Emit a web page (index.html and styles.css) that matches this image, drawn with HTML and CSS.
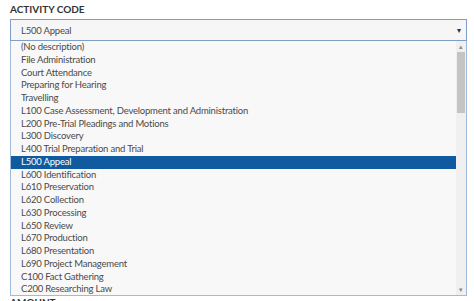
FILE: index.html
```html
<!DOCTYPE html>
<html lang="en">

<head>
    <meta charset="UTF-8">
    <title>Activity Code</title>
    <link rel="stylesheet" href="styles.css">
</head>

<body>

    <div class="field">
        <div class="field-label">ACTIVITY CODE</div>
        <div class="select">
            <span class="select-value">L500 Appeal</span>
            <span class="select-arrow">&#9662;</span>
        </div>
        <div class="dropdown">
            <ul class="options">
                <li>(No description)</li>
                <li>File Administration</li>
                <li>Court Attendance</li>
                <li>Preparing for Hearing</li>
                <li>Travelling</li>
                <li>L100 Case Assessment, Development and Administration</li>
                <li>L200 Pre-Trial Pleadings and Motions</li>
                <li>L300 Discovery</li>
                <li>L400 Trial Preparation and Trial</li>
                <li class="selected">L500 Appeal</li>
                <li>L600 Identification</li>
                <li>L610 Preservation</li>
                <li>L620 Collection</li>
                <li>L630 Processing</li>
                <li>L650 Review</li>
                <li>L670 Production</li>
                <li>L680 Presentation</li>
                <li>L690 Project Management</li>
                <li>C100 Fact Gathering</li>
                <li>C200 Researching Law</li>
            </ul>
            <div class="scrollbar">
                <div class="scroll-btn">&#9652;</div>
                <div class="scroll-track">
                    <div class="scroll-thumb"></div>
                </div>
                <div class="scroll-btn">&#9662;</div>
            </div>
        </div>
        <div class="field-label next">AMOUNT</div>
    </div>

</body>

</html>
```

FILE: styles.css
```css
body {
    margin: 0;
    padding: 4px 7px 0 10px;
    background-color: #fff;
    font-family: 'Lato', sans-serif;
    color: #4a4a4a;
    overflow: hidden;
}

.field-label {
    font-size: 10px;
    font-weight: bold;
    color: #333;
    line-height: 11px;
    margin-bottom: 4px;
}

.field-label.next {
    margin-top: 1px;
}

.select {
    display: flex;
    align-items: center;
    justify-content: space-between;
    height: 20px;
    padding: 0 5px 0 10px;
    background-color: #f6f6f6;
    border: 1px solid #7f9ec4;
    font-size: 9.5px;
    letter-spacing: -0.2px;
}

.select-arrow {
    font-size: 8px;
    color: #333;
}

.dropdown {
    display: flex;
    height: 254px;
    background-color: #f8f8f8;
    border: 1px solid #9fbadb;
    border-top: none;
}

.options {
    flex: 1;
    list-style: none;
    margin: 0;
    padding: 0;
    font-size: 9.5px;
    letter-spacing: -0.2px;
}

.options li {
    height: 12.75px;
    line-height: 12.75px;
    padding-left: 10px;
    white-space: nowrap;
}

.options li.selected {
    background-color: #105a9f;
    color: #fff;
}

.scrollbar {
    display: flex;
    flex-direction: column;
    width: 10px;
    background-color: #f0f0f0;
}

.scroll-btn {
    height: 11px;
    font-size: 7px;
    line-height: 11px;
    text-align: center;
    color: #888;
}

.scroll-track {
    flex: 1;
}

.scroll-thumb {
    height: 61px;
    margin: 0 1px;
    background-color: #c4c4c4;
}
```
